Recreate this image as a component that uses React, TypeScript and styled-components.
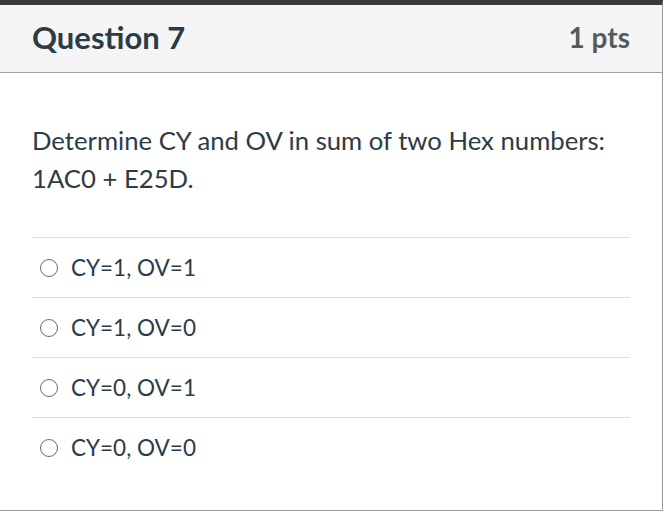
import React from "react";
import styled, { createGlobalStyle } from "styled-components";

const GlobalStyle = createGlobalStyle`
  html, body {
    margin: 0;
    padding: 0;
    background: #fff;
  }
  body {
    font-family: Lato, "Open Sans", "Liberation Sans", sans-serif;
    color: #2d3b45;
  }
`;

const Card = styled.div`
  width: 664px;
  margin-left: -1px;
  border: 1px solid #9a9a9a;
  border-top: 5px solid #3b3b3b;
  box-sizing: border-box;
  height: 511px;
  background: #fff;
`;

const Header = styled.div`
  display: flex;
  align-items: center;
  justify-content: space-between;
  height: 68px;
  padding: 0 32px 4px 32px;
  box-sizing: border-box;
  background: #f5f5f5;
  border-bottom: 1px solid #a3a3a3;
`;

const Title = styled.h2`
  margin: 0;
  font-size: 31px;
  font-weight: 700;
  color: #2d3b45;
`;

const Points = styled.span`
  font-size: 28px;
  font-weight: 700;
  color: #555a5e;
`;

const Body = styled.div`
  padding: 48px 32px 0 32px;
`;

const Prompt = styled.p`
  margin: 0 0 40px;
  font-size: 25.7px;
  line-height: 38px;
`;

const Answers = styled.div`
  display: flex;
  flex-direction: column;
`;

const Answer = styled.label`
  display: flex;
  align-items: center;
  gap: 13px;
  height: 59px;
  padding-left: 8px;
  border-top: 1px solid #dcdcdc;
  font-size: 22.5px;
  cursor: pointer;
`;

const Radio = styled.span`
  width: 16px;
  height: 16px;
  border: 1.5px solid #6b6b6b;
  border-radius: 50%;
  flex-shrink: 0;
`;

const options = ["CY=1, OV=1", "CY=1, OV=0", "CY=0, OV=1", "CY=0, OV=0"];

const App = () => {
  return <>
    <GlobalStyle/>
    <Card>
      <Header>
        <Title>Question 7</Title>
        <Points>1 pts</Points>
      </Header>
      <Body>
        <Prompt>
          Determine CY and OV in sum of two Hex numbers:<br/>
          1AC0 + E25D.
        </Prompt>
        <Answers>
          {
            options.map(option => <Answer key={option}>
              <Radio/>
              {option}
            </Answer>)
          }
        </Answers>
      </Body>
    </Card>
  </>;
};

export default App;
